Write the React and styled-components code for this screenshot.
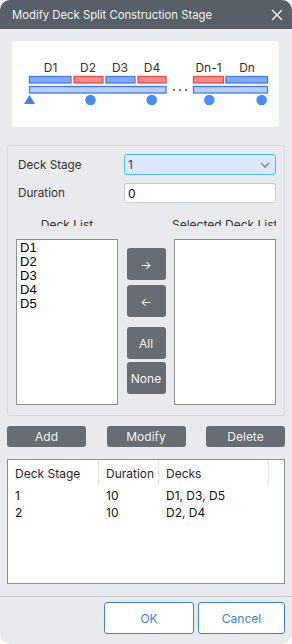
import React from "react"
import styled, { createGlobalStyle } from "styled-components"

const Global = createGlobalStyle`
  html, body { margin: 0; padding: 0; background: #ffffff; }
  * { box-sizing: border-box; }
`

const Dialog = styled.div`
  width: 292px;
  height: 644px;
  background: #e9eaee;
  border-radius: 10px;
  overflow: hidden;
  display: flex;
  flex-direction: column;
  font-family: Inter, "Noto Sans", sans-serif;
  font-size: 12px;
  color: #222;
`

const TitleBar = styled.div`
  height: 29px;
  flex: none;
  background: #595f67;
  color: #f2f2f2;
  display: flex;
  align-items: center;
  justify-content: space-between;
  padding: 0 9px 0 12px;
  font-size: 11.3px;
`

const Close = styled.svg`
  width: 12px;
  height: 12px;
`

const DiagramCard = styled.div`
  margin: 12px 13px 0 12px;
  height: 86px;
  background: #fff;
  border-radius: 3px;
  flex: none;
`

const Panel = styled.div`
  margin: 18px 7px 0 7px;
  height: 271px;
  border: 1px solid #d6d8dc;
  border-radius: 3px;
  padding: 8px 8px 0 8px;
  display: flex;
  flex-direction: column;
`

const FieldRow = styled.div`
  display: flex;
  align-items: center;
  height: ${p => p.$h}px;
  margin-bottom: ${p => p.$mb || 0}px;
  padding-left: 2px;
`

const FieldLabel = styled.div`
  width: 106px;
  font-size: 11.7px;
  color: #333;
`

const SelectBox = styled.div`
  flex: none;
  width: 152px;
  height: 21px;
  border: 1px solid #46c1ef;
  background: #dce8fa;
  border-radius: 3px;
  display: flex;
  align-items: center;
  justify-content: space-between;
  padding: 0 5px 0 3px;
  color: #444;
`

const TextBox = styled.div`
  flex: none;
  width: 152px;
  height: 20px;
  border: 1px solid #c9cbd0;
  background: #fff;
  border-radius: 3px;
  display: flex;
  align-items: center;
  padding: 0 3px;
  color: #111;
`

const ListHeads = styled.div`
  display: flex;
  justify-content: space-between;
  height: 6px;
  overflow: hidden;
  margin-top: 17px;
  margin-bottom: 13px;
`

const ListHead = styled.div`
  width: ${p => p.$w}px;
  flex: none;
  text-align: center;
  white-space: nowrap;
  font-size: 12px;
  line-height: 14px;
  margin-top: -2px;
  color: #333;
`

const ListArea = styled.div`
  display: flex;
  align-items: flex-start;
  justify-content: space-between;
`

const ListBox = styled.div`
  width: 102px;
  height: 166px;
  background: #fff;
  border: 1px solid #8c8f94;
  padding: 1px 0 0 3px;
  font-family: "Liberation Sans", Arial, sans-serif;
  font-size: 13px;
  line-height: 14px;
  color: #000;
`

const MoveCol = styled.div`
  display: flex;
  flex-direction: column;
  width: 39px;
  padding-top: 9px;
`

const GreyButton = styled.div`
  height: ${p => p.$h || 32}px;
  width: ${p => p.$w || 39}px;
  margin-top: ${p => p.$mt || 0}px;
  background: #686d74;
  color: #f2f2f2;
  border-radius: 3px;
  display: flex;
  align-items: center;
  justify-content: center;
  font-size: 12px;
`

const ActionRow = styled.div`
  display: flex;
  justify-content: space-between;
  margin: 10px 7px 0 7px;
`

const Table = styled.div`
  margin: 12px 7px 0 7px;
  height: 125px;
  background: #fff;
  border: 1px solid #8c8f94;
  flex: none;
`

const TableGrid = styled.div`
  display: grid;
  grid-template-columns: 91px 60px 110px 1fr;
`

const HeadCell = styled.div`
  height: 25px;
  display: flex;
  align-items: center;
  padding-left: 7px;
  padding-top: 2px;
  border-right: ${p => (p.$last ? "none" : "1px solid #e6e6e6")};
  color: #2a1e33;
`

const Cell = styled.div`
  height: 18px;
  display: flex;
  align-items: center;
  padding-left: 7px;
  color: #111;
  padding-top: ${p => (p.$first ? 2 : 0)}px;
`

const Footer = styled.div`
  margin-top: 12px;
  border-top: 1px solid #c6c9ce;
  display: flex;
  justify-content: flex-end;
  gap: 4px;
  padding: 5px 7px 0 0;
`

const BlueButton = styled.div`
  width: ${p => p.$w}px;
  height: 32px;
  background: #fff;
  border: 1px solid #3d7fe6;
  border-radius: 3px;
  color: #3d7fe6;
  display: flex;
  align-items: center;
  justify-content: center;
  font-size: 12px;
`

const Bar = ({ x, y, w, kind }) => {
  const fill = kind === "red" ? "#f58d8b" : kind === "light" ? "#b8cdf9" : "#86a9f3"
  const stroke = kind === "red" ? "#ef4b4b" : "#3f7cef"
  return <rect x={x + 0.5} y={y + 0.5} width={w - 1} height={6.5} fill={fill} stroke={stroke} strokeWidth="1.3" />
}

const Diagram = () => (
  <svg width="267" height="86" viewBox="12 41 267 86">
    <g fontFamily="Inter, sans-serif" fontSize="12" fill="#333" textAnchor="middle">
      <text x="50.5" y="72">D1</text>
      <text x="88" y="72">D2</text>
      <text x="120" y="72">D3</text>
      <text x="152" y="72">D4</text>
      <text x="208.5" y="72">Dn-1</text>
      <text x="247" y="72">Dn</text>
    </g>
    <Bar x={29} y={76} w={42.5} kind="blue" />
    <Bar x={73.5} y={76} w={30} kind="red" />
    <Bar x={105.5} y={76} w={30} kind="blue" />
    <Bar x={137.5} y={76} w={29} kind="red" />
    <Bar x={193} y={76} w={31} kind="red" />
    <Bar x={225.5} y={76} w={42.5} kind="blue" />
    <Bar x={29} y={86} w={137.5} kind="light" />
    <Bar x={193} y={86} w={75} kind="light" />
    <g fill="#555">
      <circle cx="174" cy="90" r="1.1" />
      <circle cx="180" cy="90" r="1.1" />
      <circle cx="186" cy="90" r="1.1" />
    </g>
    <polygon points="29.5,95 24,104 35,104" fill="#3f80ef" />
    <g fill="#4a8ef3">
      <circle cx="90.5" cy="100" r="5.3" />
      <circle cx="151.7" cy="100" r="5.3" />
      <circle cx="209.3" cy="100" r="5.3" />
      <circle cx="261.7" cy="100" r="5.3" />
    </g>
  </svg>
)

const rows = [
  ["1", "10", "D1, D3, D5"],
  ["2", "10", "D2, D4"],
]

export default function App() {
  return (
    <>
      <Global />
      <Dialog>
        <TitleBar>
          <span>Modify Deck Split Construction Stage</span>
          <Close viewBox="0 0 12 12">
            <path d="M1 1L11 11M11 1L1 11" stroke="#fff" strokeWidth="1.3" />
          </Close>
        </TitleBar>
        <DiagramCard>
          <Diagram />
        </DiagramCard>
        <Panel>
          <FieldRow $h={21} $mb={8}>
            <FieldLabel>Deck Stage</FieldLabel>
            <SelectBox>
              <span>1</span>
              <svg width="10" height="6" viewBox="0 0 10 6">
                <path d="M1 1L5 5L9 1" stroke="#8a8d92" strokeWidth="1.6" fill="none" />
              </svg>
            </SelectBox>
          </FieldRow>
          <FieldRow $h={20}>
            <FieldLabel>Duration</FieldLabel>
            <TextBox>0</TextBox>
          </FieldRow>
          <ListHeads>
            <ListHead $w={102}>Deck List</ListHead>
            <ListHead $w={104}>Selected Deck List</ListHead>
          </ListHeads>
          <ListArea>
            <ListBox>
              <div>D1</div>
              <div>D2</div>
              <div>D3</div>
              <div>D4</div>
              <div>D5</div>
            </ListBox>
            <MoveCol>
              <GreyButton>→</GreyButton>
              <GreyButton $mt={5}>←</GreyButton>
              <GreyButton $mt={10}>All</GreyButton>
              <GreyButton $mt={3}>None</GreyButton>
            </MoveCol>
            <ListBox />
          </ListArea>
        </Panel>
        <ActionRow>
          <GreyButton $w={79} $h={21}>Add</GreyButton>
          <GreyButton $w={79} $h={21}>Modify</GreyButton>
          <GreyButton $w={79} $h={21}>Delete</GreyButton>
        </ActionRow>
        <Table>
          <TableGrid>
            <HeadCell>Deck Stage</HeadCell>
            <HeadCell>Duration</HeadCell>
            <HeadCell>Decks</HeadCell>
            <HeadCell $last />
            {rows.map((r, i) => (
              <React.Fragment key={i}>
                <Cell $first={i === 0}>{r[0]}</Cell>
                <Cell $first={i === 0}>{r[1]}</Cell>
                <Cell $first={i === 0}>{r[2]}</Cell>
                <Cell $first={i === 0} />
              </React.Fragment>
            ))}
          </TableGrid>
        </Table>
        <Footer>
          <BlueButton $w={90}>OK</BlueButton>
          <BlueButton $w={87}>Cancel</BlueButton>
        </Footer>
      </Dialog>
    </>
  )
}
